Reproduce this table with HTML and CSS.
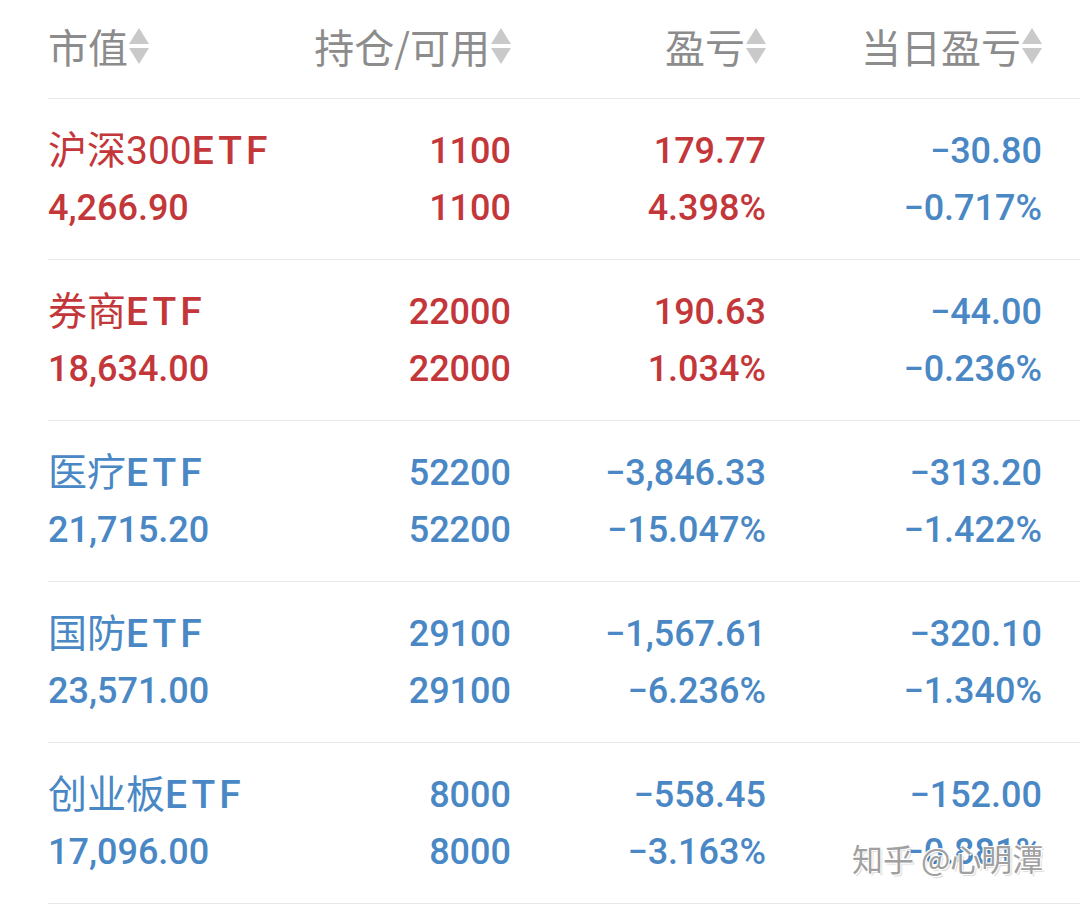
FILE: index.html
```html
<!DOCTYPE html>
<html lang="zh-CN">
<head>
<meta charset="utf-8">
<title>持仓</title>
<link rel="stylesheet" href="styles.css">
</head>
<body>
<div class="page">
  <div class="table">
    <div class="row head">
      <div class="cell c1"><span>市值</span><svg class="sort" viewBox="0 0 20 36" width="20" height="36"><path d="M10 0 L20 16 L0 16 Z"/><path d="M0 20 L20 20 L10 36 Z"/></svg></div>
      <div class="cell c2"><span>持仓/可用</span><svg class="sort" viewBox="0 0 20 36" width="20" height="36"><path d="M10 0 L20 16 L0 16 Z"/><path d="M0 20 L20 20 L10 36 Z"/></svg></div>
      <div class="cell c3"><span>盈亏</span><svg class="sort" viewBox="0 0 20 36" width="20" height="36"><path d="M10 0 L20 16 L0 16 Z"/><path d="M0 20 L20 20 L10 36 Z"/></svg></div>
      <div class="cell c4"><span>当日盈亏</span><svg class="sort" viewBox="0 0 20 36" width="20" height="36"><path d="M10 0 L20 16 L0 16 Z"/><path d="M0 20 L20 20 L10 36 Z"/></svg></div>
    </div>

    <div class="row">
      <div class="cell c1 rise"><div class="name">沪深300<span class="lat">ETF</span></div><div>4,266.90</div></div>
      <div class="cell c2 rise"><div>1100</div><div>1100</div></div>
      <div class="cell c3 rise"><div>179.77</div><div>4.398%</div></div>
      <div class="cell c4 fall"><div>−30.80</div><div>−0.717%</div></div>
    </div>

    <div class="row">
      <div class="cell c1 rise"><div class="name">券商<span class="lat">ETF</span></div><div>18,634.00</div></div>
      <div class="cell c2 rise"><div>22000</div><div>22000</div></div>
      <div class="cell c3 rise"><div>190.63</div><div>1.034%</div></div>
      <div class="cell c4 fall"><div>−44.00</div><div>−0.236%</div></div>
    </div>

    <div class="row">
      <div class="cell c1 fall"><div class="name">医疗<span class="lat">ETF</span></div><div>21,715.20</div></div>
      <div class="cell c2 fall"><div>52200</div><div>52200</div></div>
      <div class="cell c3 fall"><div>−3,846.33</div><div>−15.047%</div></div>
      <div class="cell c4 fall"><div>−313.20</div><div>−1.422%</div></div>
    </div>

    <div class="row">
      <div class="cell c1 fall"><div class="name">国防<span class="lat">ETF</span></div><div>23,571.00</div></div>
      <div class="cell c2 fall"><div>29100</div><div>29100</div></div>
      <div class="cell c3 fall"><div>−1,567.61</div><div>−6.236%</div></div>
      <div class="cell c4 fall"><div>−320.10</div><div>−1.340%</div></div>
    </div>

    <div class="row">
      <div class="cell c1 fall"><div class="name">创业板<span class="lat">ETF</span></div><div>17,096.00</div></div>
      <div class="cell c2 fall"><div>8000</div><div>8000</div></div>
      <div class="cell c3 fall"><div>−558.45</div><div>−3.163%</div></div>
      <div class="cell c4 fall"><div>−152.00</div><div>−0.881%</div></div>
    </div>
  </div>
  <div class="watermark">知乎 @心明潭</div>
</div>
</body>
</html>
```

FILE: styles.css
```css
html, body {
  margin: 0;
  padding: 0;
  background: #ffffff;
}

.page {
  position: relative;
  width: 1080px;
  height: 906px;
  overflow: hidden;
  font-family: Roboto, "Noto Sans CJK SC", sans-serif;
}

.table {
  display: flex;
  flex-direction: column;
}

.row {
  display: grid;
  grid-template-columns: 263px 200px 255px 1fr;
  margin-left: 48px;
  padding-right: 38px;
  border-bottom: 1px solid #e8e8e8;
  box-sizing: border-box;
  height: 161px;
  padding-top: 24px;
  font-size: 36px;
  font-weight: 500;
  line-height: 57px;
}

.row.head {
  height: 99px;
  padding-top: 0;
  align-items: center;
  font-family: "Noto Sans CJK SC", sans-serif;
  font-size: 40px;
  font-weight: 400;
  line-height: 40px;
  color: #8c8c8c;
}

.head .cell {
  display: flex;
  align-items: center;
  gap: 1px;
  padding-bottom: 6px;
}

.head .c2, .head .c3, .head .c4 {
  justify-content: flex-end;
}

.sort {
  fill: #c9c9c9;
  display: block;
}

.cell {
  white-space: nowrap;
}

.c2, .c3, .c4 {
  text-align: right;
}

.name {
  font-size: 39px;
  font-weight: 400;
}

.lat {
  font-weight: 500;
  letter-spacing: 4px;
}

.rise {
  color: #c3373a;
}

.fall {
  color: #4a88c5;
}

.watermark {
  position: absolute;
  left: 852px;
  top: 838px;
  font-family: "Noto Sans CJK SC", sans-serif;
  font-size: 31px;
  line-height: 40px;
  color: #a0a0a0;
  text-shadow: 1px 1px 0 #ffffff, -1px -1px 0 #ffffff, 1px -1px 0 #ffffff, -1px 1px 0 #ffffff, 2px 2px 1px rgba(0,0,0,0.15);
}
```
